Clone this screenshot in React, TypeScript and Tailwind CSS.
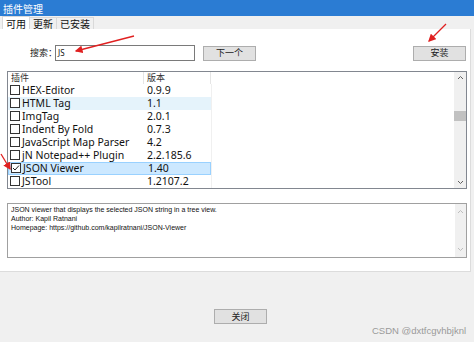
import React from "react";

const cjk = "font-['Microsoft_YaHei','Noto_Sans_CJK_SC',sans-serif]";
const ui = "font-['Noto_Sans','Noto_Sans_CJK_SC',sans-serif]";

const plugins = [
  { name: "HEX-Editor", ver: "0.9.9" },
  { name: "HTML Tag", ver: "1.1", hover: true },
  { name: "ImgTag", ver: "2.0.1" },
  { name: "Indent By Fold", ver: "0.7.3" },
  { name: "JavaScript Map Parser", ver: "4.2" },
  { name: "jN Notepad++ Plugin", ver: "2.2.185.6" },
  { name: "JSON Viewer", ver: "1.40", checked: true, selected: true },
  { name: "JSTool", ver: "1.2107.2" },
];

function Chevron({ up, light }: { up?: boolean; light?: boolean }) {
  return (
    <svg width="7" height="5" viewBox="0 0 7 5">
      <path
        d={up ? "M1 4 L3.5 1.5 L6 4" : "M1 1 L3.5 3.5 L6 1"}
        fill="none"
        stroke={light ? "#bdbdbd" : "#606060"}
        strokeWidth="1"
      />
    </svg>
  );
}

function Checkbox({ checked }: { checked?: boolean }) {
  return (
    <div className="w-[10px] h-[10px] border border-[#333] bg-white flex items-center justify-center shrink-0">
      {checked && (
        <svg width="8" height="8" viewBox="0 0 8 8">
          <path d="M1 4 L3 6 L7 1.5" fill="none" stroke="#222" strokeWidth="1" />
        </svg>
      )}
    </div>
  );
}

function Btn({ label, className = "" }: { label: string; className?: string }) {
  return (
    <div
      className={`h-[15px] w-[53px] bg-[#e1e1e1] border border-[#adadad] flex items-center justify-center text-[9px] text-[#222] whitespace-nowrap ${cjk} ${className}`}
    >
      {label}
    </div>
  );
}

export default function App() {
  return (
    <div className="relative w-[474px] h-[342px] bg-[#f0f0f0] overflow-hidden flex flex-col">
      {/* title bar */}
      <div className={`h-[16px] bg-[#2b7cd3] text-white text-[10px] pl-[3px] flex items-center ${cjk}`}>
        插件管理
      </div>

      {/* tabs */}
      <div className={`h-[13px] flex items-end pl-[2px] text-[10px] text-[#111] ${cjk}`}>
        <div className="h-[13px] px-[3px] bg-white border border-b-0 border-[#d9d9d9] flex items-center">可用</div>
        <div className="h-[12px] px-[3px] bg-[#f0f0f0] border border-b-0 border-l-0 border-[#d9d9d9] flex items-center">更新</div>
        <div className="h-[12px] px-[3px] bg-[#f0f0f0] border border-b-0 border-l-0 border-[#d9d9d9] flex items-center">已安装</div>
      </div>

      {/* tab page */}
      <div className="w-[471px] h-[243px] bg-white border-r border-b border-[#dcdcdc] flex flex-col">
        {/* search row */}
        <div className="flex items-center h-[16px] mt-[16px]">
          <span className={`ml-[30px] w-[25px] shrink-0 whitespace-nowrap text-[9px] text-[#222] ${cjk}`}>搜索：</span>
          <div className={`w-[140px] h-[16px] border border-[#7a7a7a] bg-white flex items-center pl-[2px] text-[8px] text-[#111] ${ui}`}>
            JS
          </div>
          <Btn label="下一个" className="ml-[8px]" />
          <Btn label="安装" className="ml-[157px]" />
        </div>

        {/* plugin list */}
        <div className={`ml-[7px] mt-[10px] w-[460px] h-[118px] border border-[#828790] flex ${ui}`}>
          <div className="flex-1 flex flex-col">
            <div className="h-[11.5px] flex text-[9px] text-[#333]">
              <div className={`w-[136px] pl-[3px] border-r border-[#e5e5e5] flex items-center ${cjk}`}>插件</div>
              <div className={`w-[67px] pl-[3px] border-r border-[#e5e5e5] flex items-center ${cjk}`}>版本</div>
            </div>
            {plugins.map((p) => (
              <div key={p.name} className="h-[13.05px] shrink-0 flex text-[10.5px] text-[#111]">
                <div
                  className={`w-[203px] flex items-center ${
                    p.selected
                      ? "bg-[#cce8ff] border border-[#99d1ff]"
                      : p.hover
                      ? "bg-[#e5f3fb]"
                      : ""
                  }`}
                >
                  <div className="w-[136px] flex items-center gap-[2px] pl-[2px]">
                    <Checkbox checked={p.checked} />
                    <span className="leading-none">{p.name}</span>
                  </div>
                  <div className="pl-[3px] leading-none">{p.ver}</div>
                </div>
                <div className="w-0 border-r border-[#f0f0f0]" />
              </div>
            ))}
          </div>
          <div className="w-[12px] bg-[#f0f0f0] flex flex-col items-center justify-between py-[3px]">
            <Chevron up />
            <div className="flex-1 w-full relative">
              <div className="absolute left-0 right-0 top-[31px] h-[10px] bg-[#c1c1c1]" />
            </div>
            <Chevron />
          </div>
        </div>

        {/* description */}
        <div className="ml-[7px] mt-[14px] w-[460px] h-[55px] border border-[#a0a0a0] flex">
          <div className="flex-1 pl-[3px] pt-[1px] text-[7px] leading-[9px] text-[#111] font-['Liberation_Sans',sans-serif]">
            <div>JSON viewer that displays the selected JSON string in a tree view.</div>
            <div>Author: Kapil Ratnani</div>
            <div>Homepage: https://github.com/kapilratnani/JSON-Viewer</div>
          </div>
          <div className="w-[11px] bg-[#f0f0f0] flex flex-col items-center justify-between py-[5px]">
            <Chevron up light />
            <Chevron light />
          </div>
        </div>
      </div>

      {/* bottom */}
      <div className="flex-1 flex flex-col">
        <Btn label="关闭" className="ml-[214px] mt-[37px] h-[14px]" />
        <div className="ml-[372px] mt-0 text-[9.5px] text-[#9a9a9a] font-['Liberation_Sans',sans-serif]">
          CSDN @dxtfcgvhbjknl
        </div>
      </div>

      {/* red annotation arrows */}
      <svg className="absolute left-0 top-0 pointer-events-none" width="474" height="342">
        <defs>
          <marker id="ah" markerWidth="6" markerHeight="6" refX="5" refY="3" orient="auto">
            <path d="M0 0 L6 3 L0 6 Z" fill="#e02020" />
          </marker>
        </defs>
        <line x1="134" y1="36" x2="76" y2="51" stroke="#e02020" strokeWidth="1.3" markerEnd="url(#ah)" />
        <line x1="446" y1="24" x2="429" y2="41" stroke="#e02020" strokeWidth="1.3" markerEnd="url(#ah)" />
        <line x1="1" y1="154" x2="10" y2="169" stroke="#e02020" strokeWidth="1.3" markerEnd="url(#ah)" />
      </svg>
    </div>
  );
}
